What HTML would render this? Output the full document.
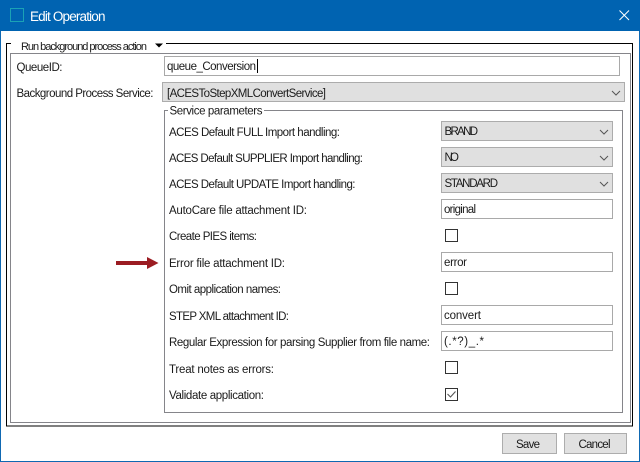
<!DOCTYPE html>
<html><head><meta charset="utf-8"><title>Edit Operation</title>
<style>
html,body{margin:0;padding:0;width:640px;height:462px;overflow:hidden;background:#fff}
svg{display:block}
text{font-family:"Liberation Sans",sans-serif;font-size:11.5px;fill:#1a1a1a}
.f{fill:#fff;stroke:#a9a9a9}
.s{fill:#e0e0e0;stroke:#acacac}
.c{fill:#fff;stroke:#333}
.v{fill:none;stroke:#555;stroke-width:1}
.b{fill:#e1e1e1;stroke:#adadad}
</style></head><body>
<svg width="640" height="462" viewBox="0 0 640 462" xmlns="http://www.w3.org/2000/svg">
<rect x="0.5" y="0.5" width="639" height="461" fill="#fff" stroke="#0f68b2"/>
<rect x="0" y="0" width="640" height="31" fill="#0063b1"/>
<rect x="10.5" y="8.5" width="13" height="13" fill="none" stroke="#1ba2b5" stroke-width="1"/>
<text x="30" y="21" style="font-size:13.5px;fill:#fff" textLength="75.5" lengthAdjust="spacing">Edit Operation</text>
<path d="M619.5 10.5L629 20M629 10.5L619.5 20" stroke="#fff" stroke-width="1" fill="none"/>

<path d="M11 43.5H6.5V426H632.5V43.5H166" fill="none" stroke="#000"/>
<path d="M155 43.5H163L159 47.5Z" fill="#000"/>
<text x="21" y="50" style="font-size:11px" textLength="126" lengthAdjust="spacing">Run background process action</text>
<rect x="10.5" y="53.5" width="620" height="369" fill="none" stroke="#85858a"/>

<text x="16.5" y="71" textLength="46" lengthAdjust="spacing">QueueID:</text>
<rect class="f" x="164.5" y="56.5" width="455" height="19"/>
<text x="167" y="70" textLength="89" lengthAdjust="spacing">queue_Conversion</text>
<rect x="257" y="59" width="1" height="14" fill="#000"/>

<text x="16.5" y="97" textLength="137" lengthAdjust="spacing">Background Process Service:</text>
<rect class="s" x="162.5" y="82.5" width="462" height="19"/>
<text x="167" y="97" textLength="159" lengthAdjust="spacing">[ACESToStepXMLConvertService]</text>
<path class="v" d="M612 91L616 95L620 91"/>

<path d="M168 110.5H164.5V412.5H622.5V110.5H264" fill="none" stroke="#85858a"/>
<text x="169.5" y="114.5" textLength="93" lengthAdjust="spacing">Service parameters</text>

<text x="169" y="136" textLength="171" lengthAdjust="spacing">ACES Default FULL Import handling:</text>
<text x="169" y="162" textLength="194" lengthAdjust="spacing">ACES Default SUPPLIER Import handling:</text>
<text x="169" y="188" textLength="186.5" lengthAdjust="spacing">ACES Default UPDATE Import handling:</text>
<text x="169" y="214" textLength="138" lengthAdjust="spacing">AutoCare file attachment ID:</text>
<text x="169" y="240" textLength="88" lengthAdjust="spacing">Create PIES items:</text>
<text x="169" y="267" textLength="116" lengthAdjust="spacing">Error file attachment ID:</text>
<text x="169" y="293" textLength="112" lengthAdjust="spacing">Omit application names:</text>
<text x="169" y="320" textLength="120" lengthAdjust="spacing">STEP XML attachment ID:</text>
<text x="169" y="346" textLength="261" lengthAdjust="spacing">Regular Expression for parsing Supplier from file name:</text>
<text x="169" y="373" textLength="105" lengthAdjust="spacing">Treat notes as errors:</text>
<text x="169" y="399" textLength="95" lengthAdjust="spacing">Validate application:</text>

<rect class="s" x="441.5" y="121.5" width="171" height="19"/>
<text x="444.5" y="135" textLength="33.5" lengthAdjust="spacing">BRAND</text>
<path class="v" d="M600 130L604 134L608 130"/>
<rect class="s" x="441.5" y="147.5" width="171" height="19"/>
<text x="444.5" y="161" textLength="14.5" lengthAdjust="spacing">NO</text>
<path class="v" d="M600 156L604 160L608 156"/>
<rect class="s" x="441.5" y="173.5" width="171" height="19"/>
<text x="444.5" y="187" textLength="53.5" lengthAdjust="spacing">STANDARD</text>
<path class="v" d="M600 182L604 186L608 182"/>
<rect class="f" x="441.5" y="199.5" width="171" height="19"/>
<text x="444" y="213" textLength="32" lengthAdjust="spacing">original</text>
<rect class="c" x="445.5" y="229.5" width="12" height="12"/>
<rect class="f" x="441.5" y="252.5" width="171" height="19"/>
<text x="444" y="266" textLength="23" lengthAdjust="spacing">error</text>
<rect class="c" x="445.5" y="282.5" width="12" height="12"/>
<rect class="f" x="441.5" y="305.5" width="171" height="19"/>
<text x="444" y="319" textLength="37" lengthAdjust="spacing">convert</text>
<rect class="f" x="441.5" y="331.5" width="171" height="19"/>
<text x="444" y="345" textLength="40" lengthAdjust="spacing">(.*?)_.*</text>
<rect class="c" x="445.5" y="361.5" width="12" height="12"/>
<rect class="c" x="445.5" y="388.5" width="12" height="12"/>
<path d="M447.5 394L450.5 397L455.5 391.5" fill="none" stroke="#555" stroke-width="1.1"/>

<path d="M116 261H147V257L158.5 263L147 269V265H116Z" fill="#9b1c22"/>

<rect class="b" x="502.5" y="433.5" width="54" height="20"/>
<text x="516" y="448" textLength="24" lengthAdjust="spacing">Save</text>
<rect class="b" x="564.5" y="433.5" width="62" height="20"/>
<text x="578.5" y="448" textLength="32" lengthAdjust="spacing">Cancel</text>
</svg>
</body></html>
